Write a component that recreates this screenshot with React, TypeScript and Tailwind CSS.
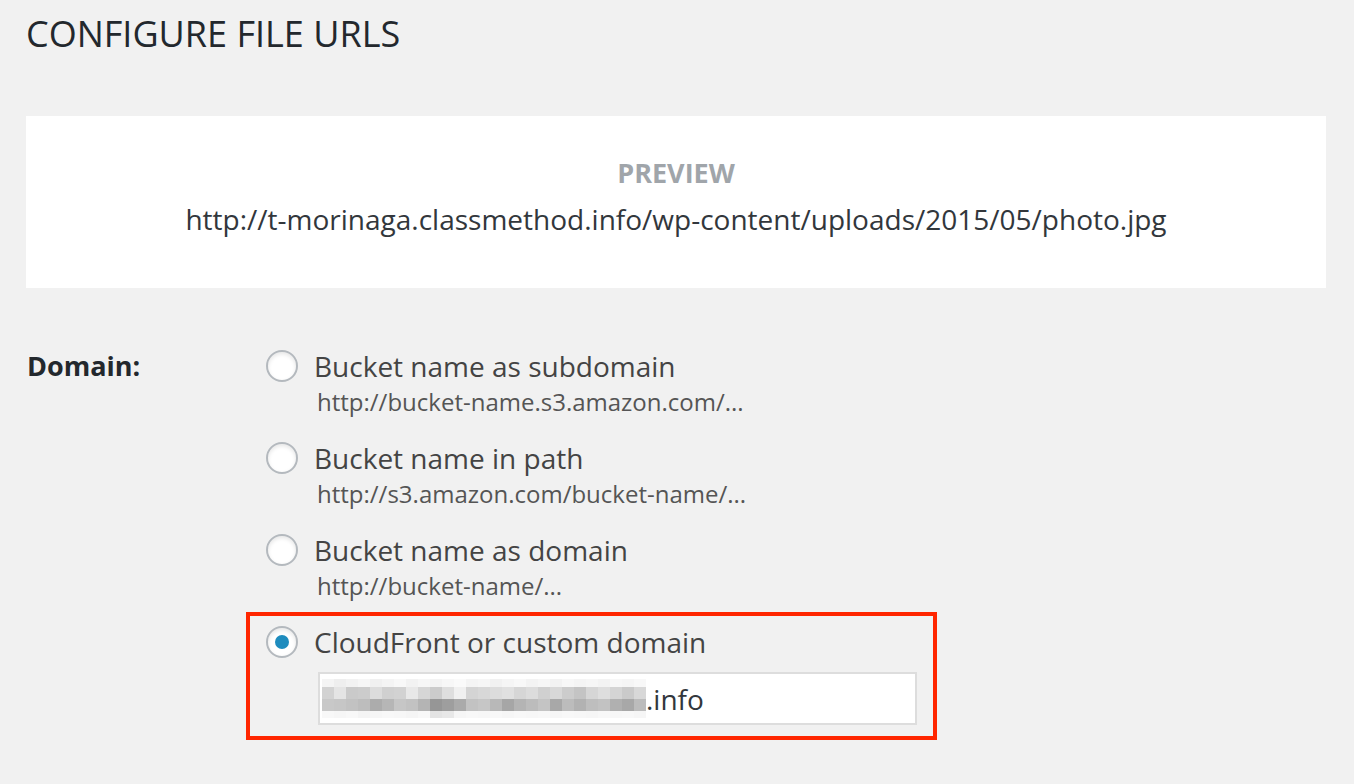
import React from "react";

const row1 = ["#f4f4f4","#eeeeee","#f2f2f2","#f6f6f6","#f0f0f0","#f4f4f4","#f8f8f8","#f2f2f2","#f6f6f6","#f3f3f3","#f7f7f7","#fafafa","#f4f4f4","#f6f6f6","#f1f1f1","#f5f5f5","#f8f8f8","#f3f3f3","#f6f6f6","#f2f2f2","#f7f7f7","#f4f4f4","#f6f6f6","#f3f3f3","#f7f7f7","#f5f5f5","#f8f8f8"];
const row2 = ["#d2d2d2","#e4e4e4","#cacaca","#cccccc","#dcdcdc","#d0d0d0","#d2d2d2","#e8e8e8","#d6d6d6","#cbcbcb","#dedede","#f0f0f0","#d4d4d4","#d8d8d8","#dcdcdc","#e0e0e0","#d6d6d6","#dcdcdc","#d0d0d0","#d8d8d8","#cccccc","#c4c4c4","#d6d6d6","#dedede","#d4d4d4","#cacaca","#d8d8d8"];
const row3 = ["#c8c8c8","#c6c6c6","#c2c2c2","#bdbdbd","#acacac","#b6b6b6","#c6c6c6","#c2c2c2","#b4b4b4","#969696","#9e9e9e","#aaaaaa","#c2c2c2","#c6c6c6","#b8b8b8","#a6a6a6","#b4b4b4","#bcbcbc","#c4c4c4","#a8a8a8","#bcbcbc","#b2b2b2","#bebebe","#c2c2c2","#b0b0b0","#a8a8a8","#bcbcbc"];
const row4 = ["#f8f8f8","#f6f6f6","#f8f8f8","#f4f4f4","#f6f6f6","#f8f8f8","#f7f7f7","#f5f5f5","#f8f8f8","#e4e4e4","#e8e8e8","#f6f6f6","#f8f8f8","#f7f7f7","#f8f8f8","#f6f6f6","#f8f8f8","#f7f7f7","#f8f8f8","#f6f6f6","#f8f8f8","#f7f7f7","#f6f6f6","#f8f8f8","#f7f7f7","#f8f8f8","#f6f6f6"];

function Mosaic() {
  const rows = [
    { y: 0, h: 8, c: row1 },
    { y: 8, h: 12, c: row2 },
    { y: 20, h: 12, c: row3 },
    { y: 32, h: 7, c: row4 },
  ];
  return (
    <svg width="324" height="39" viewBox="0 0 324 39" className="block">
      {rows.map((r) =>
        r.c.map((fill, i) => (
          <rect key={`${r.y}-${i}`} x={i * 12} y={r.y} width="12" height={r.h} fill={fill} />
        ))
      )}
    </svg>
  );
}

function Radio({ checked = false }: { checked?: boolean }) {
  return (
    <span className="flex h-8 w-8 shrink-0 items-center justify-center rounded-full border-2 border-[#b4b9be] bg-white shadow-[inset_0_2px_4px_rgba(0,0,0,0.1)]">
      {checked && <span className="h-[14px] w-[14px] rounded-full bg-[#1e8cbe]" />}
    </span>
  );
}

const options = [
  { label: "Bucket name as subdomain", hint: "http://bucket-name.s3.amazon.com/..." },
  { label: "Bucket name in path", hint: "http://s3.amazon.com/bucket-name/..." },
  { label: "Bucket name as domain", hint: "http://bucket-name/..." },
];

export default function App() {
  return (
    <div className="min-h-screen bg-[#f1f1f1] px-[26px] font-['Open_Sans',sans-serif] text-[#444]">
      <h1 className="pt-[9px] text-[36px] leading-[50px] text-[#23282d]">CONFIGURE FILE URLS</h1>

      <div className="mt-[57px] flex h-[172px] w-[1300px] flex-col items-center justify-center bg-white pb-[12px]">
        <div className="text-[27px] font-bold leading-[36px] text-[#a0a5aa]">PREVIEW</div>
        <div className="mt-[10px] text-[28px] leading-[36px] text-[#32373c]">
          http://t-morinaga.classmethod.info/wp-content/uploads/2015/05/photo.jpg
        </div>
      </div>

      <div className="mt-[60px] flex">
        <div className="w-[240px] pl-[1px] text-[27px] font-bold leading-[36px] text-[#23282d]">Domain:</div>
        <div className="flex flex-col">
          {options.map((o) => (
            <div key={o.label} className="mb-[20px]">
              <div className="flex items-center gap-4">
                <Radio />
                <span className="text-[28px] leading-[36px]">{o.label}</span>
              </div>
              <div className="pl-[51px] text-[24px] leading-[36px] text-[#555]">{o.hint}</div>
            </div>
          ))}
          <div className="-ml-[20px] -mt-[12px] w-[691px] border-4 border-[#ff2600] pb-[11px] pl-4 pr-4 pt-2">
            <div className="flex items-center gap-4">
              <Radio checked />
              <span className="text-[28px] leading-[36px]">CloudFront or custom domain</span>
            </div>
            <div className="ml-[52px] mt-3 flex h-[53px] items-center border-2 border-[#dddddd] bg-white pl-[2px]">
              <Mosaic />
              <span className="text-[28px] leading-[36px] text-[#32373c]">.info</span>
            </div>
          </div>
        </div>
      </div>
    </div>
  );
}
